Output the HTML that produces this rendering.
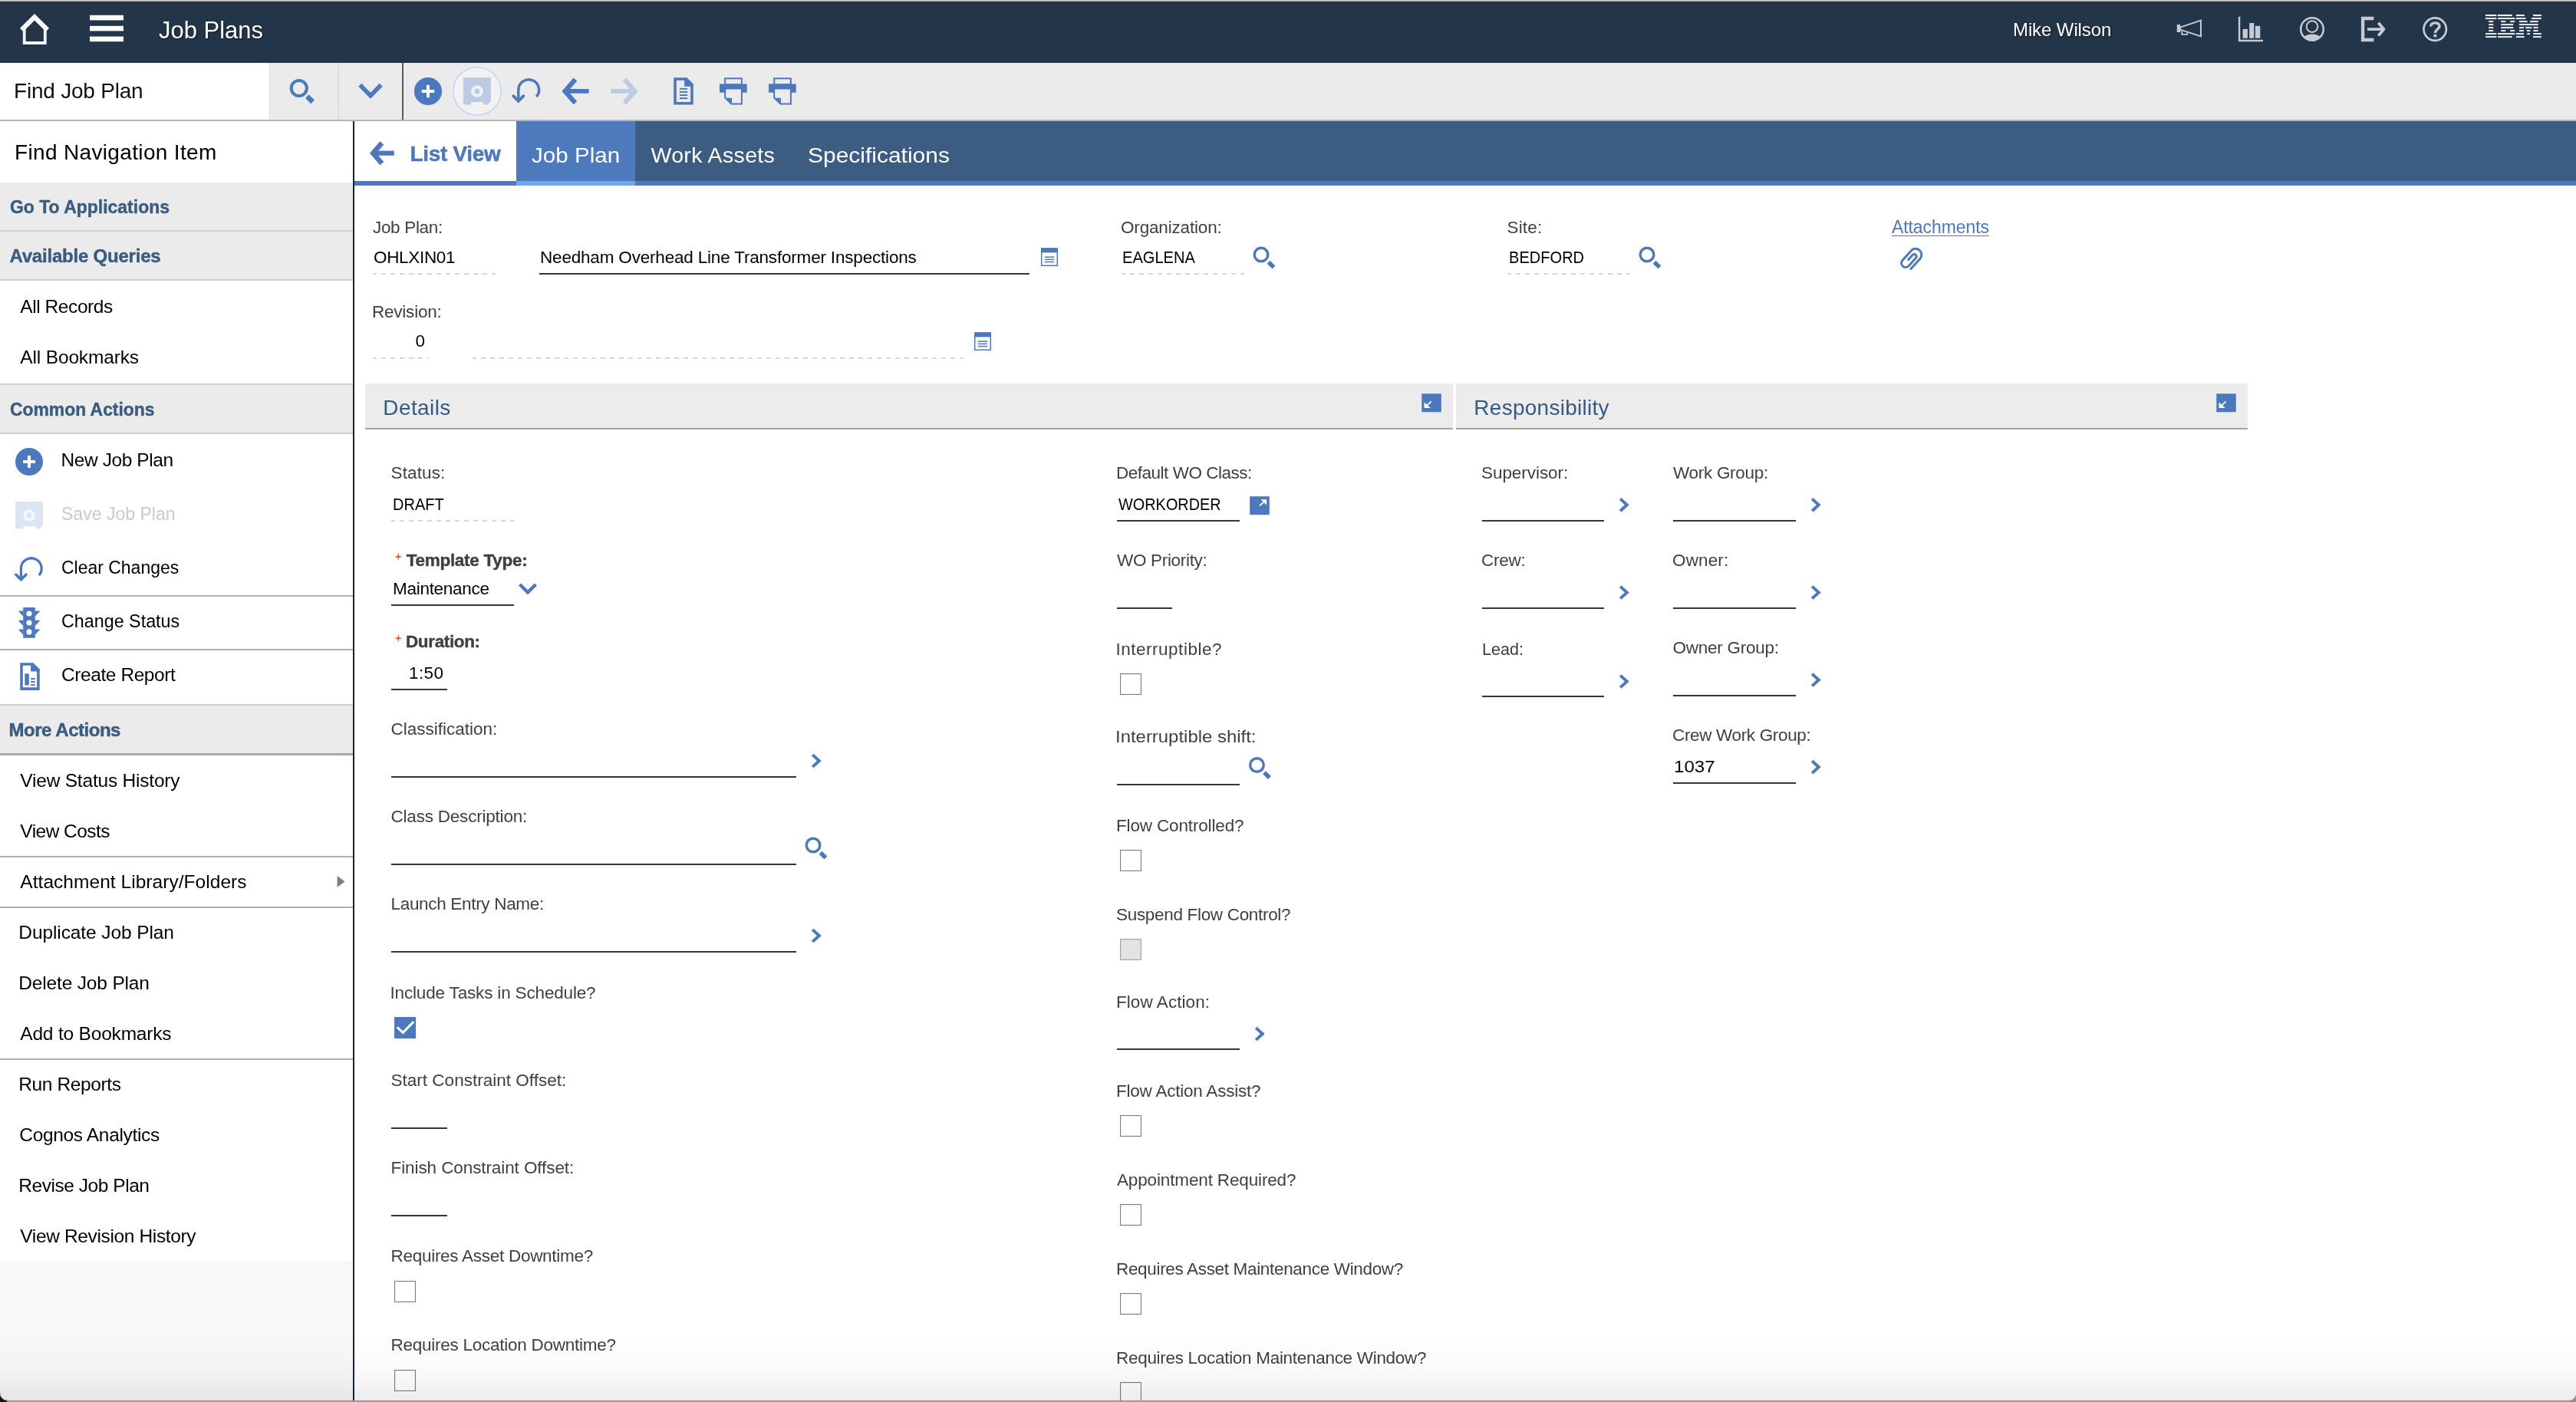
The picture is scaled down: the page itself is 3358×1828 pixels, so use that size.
<!DOCTYPE html>
<html><head><meta charset="utf-8"><title>Job Plans</title>
<style>
html,body{margin:0;padding:0;}
body{width:3358px;height:1828px;position:relative;overflow:hidden;background:#fff;font-family:"Liberation Sans", sans-serif;}
#root{position:absolute;left:0;top:0;width:3358px;height:1828px;overflow:hidden;will-change:transform;}
#root div,#root svg{position:absolute;}
.t{white-space:nowrap;}
</style></head><body><div id="root">
<div style="left:0px;top:0px;width:3358px;height:2px;background:#c0c0c0;"></div>
<div style="left:0px;top:2px;width:3358px;height:80px;background:#233548;"></div>
<div style="left:0px;top:2px;width:3358px;height:1px;background:#1c2e43;"></div>
<div style="left:0px;top:82px;width:3358px;height:74px;background:#ebebeb;"></div>
<div style="left:0px;top:82px;width:351px;height:74px;background:#fff;"></div>
<div style="left:351px;top:82px;width:1px;height:74px;background:#d9d9d9;"></div>
<div style="left:440px;top:82px;width:2px;height:74px;background:#dcdcdc;"></div>
<div style="left:524px;top:82px;width:2px;height:74px;background:#5a5a5a;"></div>
<div style="left:0px;top:156px;width:3358px;height:2px;background:#b5b5b5;"></div>
<div style="left:0px;top:158px;width:460px;height:80px;background:#fff;"></div>
<div style="left:0px;top:238px;width:460px;height:62px;background:#ebebeb;"></div>
<div style="left:0px;top:300px;width:460px;height:2px;background:#cfcfcf;"></div>
<div style="left:0px;top:302px;width:460px;height:62px;background:#ebebeb;"></div>
<div style="left:0px;top:364px;width:460px;height:2px;background:#cfcfcf;"></div>
<div style="left:0px;top:366px;width:460px;height:134px;background:#fff;"></div>
<div style="left:0px;top:500px;width:460px;height:2px;background:#cfcfcf;"></div>
<div style="left:0px;top:502px;width:460px;height:62px;background:#ebebeb;"></div>
<div style="left:0px;top:564px;width:460px;height:2px;background:#cfcfcf;"></div>
<div style="left:0px;top:566px;width:460px;height:352px;background:#fff;"></div>
<div style="left:0px;top:776px;width:460px;height:2px;background:#b0b0b0;"></div>
<div style="left:0px;top:846px;width:460px;height:2px;background:#b0b0b0;"></div>
<div style="left:0px;top:918px;width:460px;height:2px;background:#d2d2d2;"></div>
<div style="left:0px;top:920px;width:460px;height:62px;background:#ebebeb;"></div>
<div style="left:0px;top:982px;width:460px;height:3px;background:#a9a9a9;"></div>
<div style="left:0px;top:985px;width:460px;height:659px;background:#fff;"></div>
<div style="left:0px;top:1116px;width:460px;height:2px;background:#b0b0b0;"></div>
<div style="left:0px;top:1182px;width:460px;height:2px;background:#b0b0b0;"></div>
<div style="left:0px;top:1380px;width:460px;height:2px;background:#b0b0b0;"></div>
<div style="left:0px;top:1644px;width:460px;height:184px;background:#f8f8f8;"></div>
<div style="left:460px;top:158px;width:2px;height:1670px;background:#10263c;"></div>
<div style="left:462px;top:158px;width:2896px;height:78px;background:#3c5c82;"></div>
<div style="left:462px;top:158px;width:211px;height:78px;background:#fff;"></div>
<div style="left:673px;top:158px;width:155px;height:78px;background:#4d79bd;"></div>
<div style="left:462px;top:236px;width:2896px;height:6px;background:#4d79bd;"></div>
<div style="left:673px;top:236px;width:155px;height:6px;background:#6baaf0;"></div>
<div style="left:476px;top:500px;width:1418px;height:58px;background:#ececec;"></div>
<div style="left:476px;top:558px;width:1418px;height:2px;background:#a3a3a3;"></div>
<div style="left:1898px;top:500px;width:1032px;height:58px;background:#ececec;"></div>
<div style="left:1898px;top:558px;width:1032px;height:2px;background:#a3a3a3;"></div>
<div class="t" style="left:207.00px;top:23px;font-size:32px;line-height:32px;color:#fff;transform:scaleX(0.9675);transform-origin:0 0;text-shadow:1px 1px 2px rgba(0,0,0,.5);">Job Plans</div>
<div class="t" style="left:2624.00px;top:27px;font-size:24px;line-height:24px;color:#fff;letter-spacing:-0.100px;text-shadow:1px 1px 2px rgba(0,0,0,.5);">Mike Wilson</div>
<div class="t" style="left:18.00px;top:105px;font-size:28px;line-height:28px;color:#111;letter-spacing:-0.220px;">Find Job Plan</div>
<div class="t" style="left:534.40px;top:187px;font-size:28px;line-height:28px;color:#4c78bd;letter-spacing:-0.310px;font-weight:bold;-webkit-text-stroke:0.5px #4c78bd;">List View</div>
<div class="t" style="left:693.30px;top:188px;font-size:28.5px;line-height:28.5px;color:#fff;transform:scaleX(1.0380);transform-origin:0 0;">Job Plan</div>
<div class="t" style="left:848.40px;top:188px;font-size:28.5px;line-height:28.5px;color:#fff;letter-spacing:0.363px;">Work Assets</div>
<div class="t" style="left:1052.75px;top:188px;font-size:28.5px;line-height:28.5px;color:#fff;transform:scaleX(1.0516);transform-origin:0 0;">Specifications</div>
<div class="t" style="left:19.00px;top:185px;font-size:28px;line-height:28px;color:#000;letter-spacing:0.344px;">Find Navigation Item</div>
<div class="t" style="left:12.50px;top:258px;font-size:24px;line-height:24px;color:#3b5c82;transform:scaleX(0.9570);transform-origin:0 0;font-weight:bold;-webkit-text-stroke:0.45px #3b5c82;">Go To Applications</div>
<div class="t" style="left:12.50px;top:322px;font-size:24px;line-height:24px;color:#3b5c82;letter-spacing:-0.212px;font-weight:bold;-webkit-text-stroke:0.45px #3b5c82;">Available Queries</div>
<div class="t" style="left:12.50px;top:522px;font-size:24px;line-height:24px;color:#3b5c82;transform:scaleX(0.9530);transform-origin:0 0;font-weight:bold;-webkit-text-stroke:0.45px #3b5c82;">Common Actions</div>
<div class="t" style="left:11.50px;top:940px;font-size:24px;line-height:24px;color:#3b5c82;letter-spacing:-0.470px;font-weight:bold;-webkit-text-stroke:0.45px #3b5c82;">More Actions</div>
<div class="t" style="left:26.30px;top:388px;font-size:24.5px;line-height:24.5px;color:#000;letter-spacing:-0.431px;">All Records</div>
<div class="t" style="left:26.30px;top:454px;font-size:24.5px;line-height:24.5px;color:#000;letter-spacing:-0.152px;">All Bookmarks</div>
<div class="t" style="left:79.50px;top:588px;font-size:24.5px;line-height:24.5px;color:#000;letter-spacing:-0.412px;">New Job Plan</div>
<div class="t" style="left:80.06px;top:658px;font-size:24.5px;line-height:24.5px;color:#c9c9c9;transform:scaleX(0.9401);transform-origin:0 0;">Save Job Plan</div>
<div class="t" style="left:80.06px;top:728px;font-size:24.5px;line-height:24.5px;color:#000;transform:scaleX(0.9373);transform-origin:0 0;">Clear Changes</div>
<div class="t" style="left:80.05px;top:798px;font-size:24.5px;line-height:24.5px;color:#000;transform:scaleX(0.9513);transform-origin:0 0;">Change Status</div>
<div class="t" style="left:80.00px;top:868px;font-size:24.5px;line-height:24.5px;color:#000;letter-spacing:-0.423px;">Create Report</div>
<div class="t" style="left:26.30px;top:1006px;font-size:24.5px;line-height:24.5px;color:#000;letter-spacing:-0.206px;">View Status History</div>
<div class="t" style="left:26.30px;top:1072px;font-size:24.5px;line-height:24.5px;color:#000;letter-spacing:-0.538px;">View Costs</div>
<div class="t" style="left:26.30px;top:1138px;font-size:24.5px;line-height:24.5px;color:#000;letter-spacing:0.045px;">Attachment Library/Folders</div>
<div class="t" style="left:24.30px;top:1204px;font-size:24.5px;line-height:24.5px;color:#000;letter-spacing:-0.098px;">Duplicate Job Plan</div>
<div class="t" style="left:24.30px;top:1270px;font-size:24.5px;line-height:24.5px;color:#000;letter-spacing:-0.168px;">Delete Job Plan</div>
<div class="t" style="left:26.30px;top:1336px;font-size:24.5px;line-height:24.5px;color:#000;letter-spacing:-0.195px;">Add to Bookmarks</div>
<div class="t" style="left:24.30px;top:1402px;font-size:24.5px;line-height:24.5px;color:#000;letter-spacing:-0.379px;">Run Reports</div>
<div class="t" style="left:25.30px;top:1468px;font-size:24.5px;line-height:24.5px;color:#000;letter-spacing:-0.336px;">Cognos Analytics</div>
<div class="t" style="left:24.30px;top:1534px;font-size:24.5px;line-height:24.5px;color:#000;letter-spacing:-0.458px;">Revise Job Plan</div>
<div class="t" style="left:26.30px;top:1600px;font-size:24.5px;line-height:24.5px;color:#000;letter-spacing:-0.360px;">View Revision History</div>
<div class="t" style="left:486.00px;top:286px;font-size:22.5px;line-height:22.5px;color:#404040;letter-spacing:-0.320px;">Job Plan:</div>
<div class="t" style="left:487.00px;top:325px;font-size:22.5px;line-height:22.5px;color:#000;letter-spacing:-0.326px;">OHLXIN01</div>
<div class="t" style="left:704.00px;top:325px;font-size:22.5px;line-height:22.5px;color:#000;letter-spacing:-0.186px;">Needham Overhead Line Transformer Inspections</div>
<div class="t" style="left:485.00px;top:396px;font-size:22.5px;line-height:22.5px;color:#404040;letter-spacing:-0.223px;">Revision:</div>
<div class="t" style="left:541.50px;top:434px;font-size:22.5px;line-height:22.5px;color:#000;">0</div>
<div class="t" style="left:1461.00px;top:286px;font-size:22.5px;line-height:22.5px;color:#404040;letter-spacing:-0.173px;">Organization:</div>
<div class="t" style="left:1463.11px;top:325px;font-size:22.5px;line-height:22.5px;color:#000;transform:scaleX(0.8928);transform-origin:0 0;">EAGLENA</div>
<div class="t" style="left:1964.50px;top:286px;font-size:22.5px;line-height:22.5px;color:#404040;letter-spacing:0.182px;">Site:</div>
<div class="t" style="left:1967.11px;top:325px;font-size:22.5px;line-height:22.5px;color:#000;transform:scaleX(0.8919);transform-origin:0 0;">BEDFORD</div>
<div class="t" style="left:2466.00px;top:285px;font-size:23px;line-height:23px;color:#4c78bd;letter-spacing:-0.084px;">Attachments</div>
<div style="left:2466px;top:306.7px;width:127px;height:1.6px;background:#4c78bd;"></div>
<div class="t" style="left:499.30px;top:518px;font-size:28px;line-height:28px;color:#355a83;letter-spacing:0.402px;">Details</div>
<div class="t" style="left:1921.30px;top:518px;font-size:28px;line-height:28px;color:#355a83;letter-spacing:0.274px;">Responsibility</div>
<div class="t" style="left:509.50px;top:606px;font-size:22.5px;line-height:22.5px;color:#404040;letter-spacing:0.119px;">Status:</div>
<div class="t" style="left:512.11px;top:647px;font-size:22.5px;line-height:22.5px;color:#000;transform:scaleX(0.8889);transform-origin:0 0;">DRAFT</div>
<div class="t" style="left:529.70px;top:720px;font-size:22.5px;line-height:22.5px;color:#404040;letter-spacing:-0.285px;font-weight:bold;-webkit-text-stroke:0.4px #404040;">Template Type:</div>
<div class="t" style="left:512.00px;top:757px;font-size:22.5px;line-height:22.5px;color:#000;letter-spacing:-0.282px;">Maintenance</div>
<div class="t" style="left:529.00px;top:826px;font-size:22.5px;line-height:22.5px;color:#404040;letter-spacing:-0.374px;font-weight:bold;-webkit-text-stroke:0.4px #404040;">Duration:</div>
<div class="t" style="left:533.00px;top:867px;font-size:22.5px;line-height:22.5px;color:#000;letter-spacing:0.407px;">1:50</div>
<div class="t" style="left:509.50px;top:940px;font-size:22.5px;line-height:22.5px;color:#404040;">Classification:</div>
<div class="t" style="left:509.50px;top:1054px;font-size:22.5px;line-height:22.5px;color:#404040;letter-spacing:-0.209px;">Class Description:</div>
<div class="t" style="left:509.50px;top:1168px;font-size:22.5px;line-height:22.5px;color:#404040;letter-spacing:-0.315px;">Launch Entry Name:</div>
<div class="t" style="left:508.50px;top:1284px;font-size:22.5px;line-height:22.5px;color:#404040;letter-spacing:-0.166px;">Include Tasks in Schedule?</div>
<div class="t" style="left:509.50px;top:1398px;font-size:22.5px;line-height:22.5px;color:#404040;letter-spacing:0.014px;">Start Constraint Offset:</div>
<div class="t" style="left:509.50px;top:1512px;font-size:22.5px;line-height:22.5px;color:#404040;letter-spacing:-0.091px;">Finish Constraint Offset:</div>
<div class="t" style="left:509.50px;top:1627px;font-size:22.5px;line-height:22.5px;color:#404040;letter-spacing:-0.276px;">Requires Asset Downtime?</div>
<div class="t" style="left:509.50px;top:1743px;font-size:22.5px;line-height:22.5px;color:#404040;letter-spacing:-0.256px;">Requires Location Downtime?</div>
<div class="t" style="left:1455.00px;top:606px;font-size:22.5px;line-height:22.5px;color:#404040;letter-spacing:-0.487px;">Default WO Class:</div>
<div class="t" style="left:1457.50px;top:647px;font-size:22.5px;line-height:22.5px;color:#000;transform:scaleX(0.8841);transform-origin:0 0;">WORKORDER</div>
<div class="t" style="left:1456.00px;top:720px;font-size:22.5px;line-height:22.5px;color:#404040;letter-spacing:-0.318px;">WO Priority:</div>
<div class="t" style="left:1454.40px;top:836px;font-size:22.5px;line-height:22.5px;color:#404040;letter-spacing:0.522px;">Interruptible?</div>
<div class="t" style="left:1453.87px;top:950px;font-size:22.5px;line-height:22.5px;color:#404040;transform:scaleX(1.0630);transform-origin:0 0;">Interruptible shift:</div>
<div class="t" style="left:1455.00px;top:1066px;font-size:22.5px;line-height:22.5px;color:#404040;letter-spacing:-0.154px;">Flow Controlled?</div>
<div class="t" style="left:1455.00px;top:1182px;font-size:22.5px;line-height:22.5px;color:#404040;letter-spacing:-0.318px;">Suspend Flow Control?</div>
<div class="t" style="left:1455.00px;top:1296px;font-size:22.5px;line-height:22.5px;color:#404040;letter-spacing:0.065px;">Flow Action:</div>
<div class="t" style="left:1455.00px;top:1412px;font-size:22.5px;line-height:22.5px;color:#404040;letter-spacing:-0.225px;">Flow Action Assist?</div>
<div class="t" style="left:1456.00px;top:1528px;font-size:22.5px;line-height:22.5px;color:#404040;letter-spacing:-0.145px;">Appointment Required?</div>
<div class="t" style="left:1455.00px;top:1644px;font-size:22.5px;line-height:22.5px;color:#404040;letter-spacing:-0.331px;">Requires Asset Maintenance Window?</div>
<div class="t" style="left:1455.00px;top:1760px;font-size:22.5px;line-height:22.5px;color:#404040;letter-spacing:-0.298px;">Requires Location Maintenance Window?</div>
<div class="t" style="left:1931.00px;top:606px;font-size:22.5px;line-height:22.5px;color:#404040;letter-spacing:-0.055px;">Supervisor:</div>
<div class="t" style="left:1931.00px;top:720px;font-size:22.5px;line-height:22.5px;color:#404040;letter-spacing:-0.251px;">Crew:</div>
<div class="t" style="left:1931.54px;top:836px;font-size:22.5px;line-height:22.5px;color:#404040;transform:scaleX(0.9583);transform-origin:0 0;">Lead:</div>
<div class="t" style="left:2181.00px;top:606px;font-size:22.5px;line-height:22.5px;color:#404040;letter-spacing:-0.287px;">Work Group:</div>
<div class="t" style="left:2180.00px;top:720px;font-size:22.5px;line-height:22.5px;color:#404040;letter-spacing:0.146px;">Owner:</div>
<div class="t" style="left:2180.60px;top:834px;font-size:22.5px;line-height:22.5px;color:#404040;letter-spacing:-0.269px;">Owner Group:</div>
<div class="t" style="left:2180.00px;top:948px;font-size:22.5px;line-height:22.5px;color:#404040;letter-spacing:-0.342px;">Crew Work Group:</div>
<div class="t" style="left:2181.93px;top:989px;font-size:22.5px;line-height:22.5px;color:#000;transform:scaleX(1.0713);transform-origin:0 0;">1037</div>
<div style="left:486px;top:356px;width:160px;height:2px;background:repeating-linear-gradient(90deg,#d6d6d6 0 5px,transparent 5px 11px,#d6d6d6 11px 12px);"></div>
<div style="left:703px;top:356px;width:639px;height:2px;background:#353535;"></div>
<div style="left:486px;top:466px;width:73px;height:2px;background:repeating-linear-gradient(90deg,#d6d6d6 0 5px,transparent 5px 11px,#d6d6d6 11px 12px);"></div>
<div style="left:616px;top:466px;width:640px;height:2px;background:repeating-linear-gradient(90deg,#d6d6d6 0 5px,transparent 5px 11px,#d6d6d6 11px 12px);"></div>
<div style="left:1462px;top:356px;width:160px;height:2px;background:repeating-linear-gradient(90deg,#d6d6d6 0 5px,transparent 5px 11px,#d6d6d6 11px 12px);"></div>
<div style="left:1965px;top:356px;width:160px;height:2px;background:repeating-linear-gradient(90deg,#d6d6d6 0 5px,transparent 5px 11px,#d6d6d6 11px 12px);"></div>
<div style="left:510px;top:678px;width:160px;height:2px;background:repeating-linear-gradient(90deg,#d6d6d6 0 5px,transparent 5px 11px,#d6d6d6 11px 12px);"></div>
<div style="left:510px;top:788px;width:160px;height:2px;background:#353535;"></div>
<div style="left:510px;top:898px;width:73px;height:2px;background:#353535;"></div>
<div style="left:510px;top:1012px;width:528px;height:2px;background:#353535;"></div>
<div style="left:510px;top:1126px;width:528px;height:2px;background:#353535;"></div>
<div style="left:510px;top:1240px;width:528px;height:2px;background:#353535;"></div>
<div style="left:510px;top:1470px;width:73px;height:2px;background:#353535;"></div>
<div style="left:510px;top:1584px;width:73px;height:2px;background:#353535;"></div>
<div style="left:1456px;top:678px;width:160px;height:2px;background:#353535;"></div>
<div style="left:1456px;top:791.6px;width:72px;height:2px;background:#353535;"></div>
<div style="left:1456px;top:1022px;width:160px;height:2px;background:#353535;"></div>
<div style="left:1456px;top:1367px;width:160px;height:2px;background:#353535;"></div>
<div style="left:1932px;top:678px;width:159px;height:2px;background:#353535;"></div>
<div style="left:1932px;top:791.6px;width:159px;height:2px;background:#353535;"></div>
<div style="left:1932px;top:907.4px;width:159px;height:2px;background:#353535;"></div>
<div style="left:2181px;top:678px;width:160px;height:2px;background:#353535;"></div>
<div style="left:2181px;top:791.6px;width:160px;height:2px;background:#353535;"></div>
<div style="left:2181px;top:905.7px;width:160px;height:2px;background:#353535;"></div>
<div style="left:2181px;top:1020px;width:160px;height:2px;background:#353535;"></div>
<svg style="left:514px;top:1326px;" width="28" height="28" viewBox="0 0 28 28"><rect width="28" height="28" fill="#4c78bd"/><path d="M3.8 13.3 L11.3 20.4 L25.2 6.1" fill="none" stroke="#fff" stroke-width="3"/></svg>
<div style="left:514px;top:1670px;width:28px;height:28px;box-sizing:border-box;border:1.2px solid #7c7c7c;background:#fff;box-shadow:inset 0 0 0 1px rgba(0,0,0,0.06);"></div>
<div style="left:514px;top:1786px;width:28px;height:28px;box-sizing:border-box;border:1.2px solid #7c7c7c;background:#fff;box-shadow:inset 0 0 0 1px rgba(0,0,0,0.06);"></div>
<div style="left:1460px;top:878px;width:28px;height:28px;box-sizing:border-box;border:1.2px solid #7c7c7c;background:#fff;box-shadow:inset 0 0 0 1px rgba(0,0,0,0.06);"></div>
<div style="left:1460px;top:1108px;width:28px;height:28px;box-sizing:border-box;border:1.2px solid #7c7c7c;background:#fff;box-shadow:inset 0 0 0 1px rgba(0,0,0,0.06);"></div>
<div style="left:1460px;top:1224px;width:28px;height:28px;box-sizing:border-box;border:1.2px solid #a6a6a6;background:#e3e3e3;box-shadow:inset 0 0 0 1px rgba(0,0,0,0.06);"></div>
<div style="left:1460px;top:1454px;width:28px;height:28px;box-sizing:border-box;border:1.2px solid #7c7c7c;background:#fff;box-shadow:inset 0 0 0 1px rgba(0,0,0,0.06);"></div>
<div style="left:1460px;top:1570px;width:28px;height:28px;box-sizing:border-box;border:1.2px solid #7c7c7c;background:#fff;box-shadow:inset 0 0 0 1px rgba(0,0,0,0.06);"></div>
<div style="left:1460px;top:1686px;width:28px;height:28px;box-sizing:border-box;border:1.2px solid #7c7c7c;background:#fff;box-shadow:inset 0 0 0 1px rgba(0,0,0,0.06);"></div>
<div style="left:1460px;top:1802px;width:28px;height:28px;box-sizing:border-box;border:1.2px solid #7c7c7c;background:#fff;box-shadow:inset 0 0 0 1px rgba(0,0,0,0.06);"></div>
<svg style="left:0;top:0" width="3358" height="1828" viewBox="0 0 3358 1828"><path d="M28.1 39 L45 22.3 L61.9 39" fill="none" stroke="#fff" stroke-width="6" stroke-linejoin="miter"/><path d="M31.7 38 V56 H58.8 V38" fill="none" stroke="#f2f4f6" stroke-width="3.8"/><rect x="117" y="19.8" width="44" height="6.6" fill="#fff"/><rect x="117" y="33.8" width="44" height="6.6" fill="#fff"/><rect x="117" y="47.6" width="44" height="6.6" fill="#fff"/><path d="M2842 35.6 L2869 26.6 V47.4 L2842 38.6 Z" fill="none" stroke="#c5cbd3" stroke-width="2" stroke-linejoin="miter"/><rect x="2837.8" y="32" width="4.4" height="10" fill="#c5cbd3"/><path d="M2844.3 40.5 V44.8 H2851.2 V42.6" fill="none" stroke="#c5cbd3" stroke-width="1.8"/><path d="M2919.1 21.8 V53 H2950" fill="none" stroke="#c5cbd3" stroke-width="2.4"/><rect x="2923.6" y="37.9" width="6.3" height="11.9" fill="#c5cbd3"/><rect x="2932.2" y="30" width="6.1" height="19.8" fill="#c5cbd3"/><rect x="2939.9" y="33.8" width="6.4" height="16" fill="#c5cbd3"/><path d="M3002.78 48.26 A14 9.6 0 0 1 3025.22 48.26 A15.2 15.2 0 0 1 3002.78 48.26 Z" fill="#c5cbd3"/><circle cx="3014" cy="38" r="14.8" fill="none" stroke="#c5cbd3" stroke-width="2.5"/><circle cx="3014" cy="34.6" r="7.3" fill="none" stroke="#c5cbd3" stroke-width="2"/><path d="M3094.4 24 H3080.1 V52 H3094.4" fill="none" stroke="#c5cbd3" stroke-width="4.4"/><path d="M3086 38.1 H3106" fill="none" stroke="#c5cbd3" stroke-width="3.7"/><path d="M3100.4 29.7 L3107.4 38.1 L3100.4 46.5" fill="none" stroke="#c5cbd3" stroke-width="3.7" stroke-linejoin="miter"/><circle cx="3174.2" cy="38.1" r="14.7" fill="none" stroke="#c5cbd3" stroke-width="2.7"/><path d="M3168.8 34.4 C3168.8 30.6 3171.2 29.9 3174.3 29.9 C3177.6 29.9 3180 31.4 3180 34.2 C3180 37.6 3174.4 38.6 3174.4 43" fill="none" stroke="#c5cbd3" stroke-width="3.4"/><rect x="3172.4" y="44.8" width="4" height="3.6" fill="#c5cbd3"/><rect x="3240.0" y="19" width="14.4" height="2.1" fill="#fff"/><rect x="3256.0" y="19" width="18.7" height="2.1" fill="#fff"/><rect x="3279.8" y="19" width="10.9" height="2.1" fill="#fff"/><rect x="3302.0" y="19" width="10.9" height="2.1" fill="#fff"/><rect x="3240.0" y="23" width="14.4" height="2.1" fill="#dfe3e8"/><rect x="3256.0" y="23" width="22.4" height="2.1" fill="#dfe3e8"/><rect x="3279.8" y="23" width="12.8" height="2.1" fill="#dfe3e8"/><rect x="3300.0" y="23" width="12.9" height="2.1" fill="#dfe3e8"/><rect x="3244.2" y="27" width="6.1" height="2.1" fill="#dfe3e8"/><rect x="3260.2" y="27" width="6.1" height="2.1" fill="#dfe3e8"/><rect x="3272.1" y="27" width="6.1" height="2.1" fill="#dfe3e8"/><rect x="3284.0" y="27" width="10.6" height="2.1" fill="#dfe3e8"/><rect x="3298.1" y="27" width="10.6" height="2.1" fill="#dfe3e8"/><rect x="3244.2" y="31" width="6.1" height="2.1" fill="#dfe3e8"/><rect x="3260.2" y="31" width="16.1" height="2.1" fill="#dfe3e8"/><rect x="3284.0" y="31" width="24.7" height="2.1" fill="#dfe3e8"/><rect x="3244.2" y="35" width="6.1" height="2.1" fill="#dfe3e8"/><rect x="3260.2" y="35" width="16.1" height="2.1" fill="#dfe3e8"/><rect x="3284.0" y="35" width="6.0" height="2.1" fill="#dfe3e8"/><rect x="3292.0" y="35" width="8.4" height="2.1" fill="#dfe3e8"/><rect x="3302.3" y="35" width="6.4" height="2.1" fill="#dfe3e8"/><rect x="3244.2" y="39" width="6.1" height="2.1" fill="#dfe3e8"/><rect x="3260.2" y="39" width="6.1" height="2.1" fill="#dfe3e8"/><rect x="3272.1" y="39" width="6.1" height="2.1" fill="#dfe3e8"/><rect x="3284.0" y="39" width="6.0" height="2.1" fill="#dfe3e8"/><rect x="3293.9" y="39" width="4.5" height="2.1" fill="#dfe3e8"/><rect x="3302.3" y="39" width="6.4" height="2.1" fill="#dfe3e8"/><rect x="3240.0" y="43" width="14.4" height="2.1" fill="#dfe3e8"/><rect x="3256.0" y="43" width="22.4" height="2.1" fill="#dfe3e8"/><rect x="3279.8" y="43" width="10.2" height="2.1" fill="#dfe3e8"/><rect x="3294.3" y="43" width="3.7" height="2.1" fill="#dfe3e8"/><rect x="3302.3" y="43" width="10.6" height="2.1" fill="#dfe3e8"/><rect x="3240.0" y="47" width="14.4" height="2.1" fill="#dfe3e8"/><rect x="3256.0" y="47" width="18.7" height="2.1" fill="#dfe3e8"/><rect x="3279.8" y="47" width="10.9" height="2.1" fill="#dfe3e8"/><rect x="3302.0" y="47" width="10.9" height="2.1" fill="#dfe3e8"/><circle cx="389.8" cy="115" r="10.1" fill="none" stroke="#4c78bd" stroke-width="4"/><rect x="400.31" y="122.35" width="10.2" height="6.7" fill="#4c78bd" transform="rotate(44 400.31 125.70)"/><path d="M469.3 110.8 L483 124.8 L496.7 110.8" fill="none" stroke="#4c78bd" stroke-width="5.6" stroke-linejoin="miter"/><circle cx="558" cy="119" r="18.1" fill="#4c78bd"/><rect x="549.8" y="117.0" width="16.4" height="4" fill="#fff"/><rect x="556.0" y="110.8" width="4" height="16.4" fill="#fff"/><circle cx="622" cy="119" r="31.2" fill="#f2f2f2" stroke="#c3d9f3" stroke-width="1.6"/><path d="M604 101 H640 V132 L635.5 136.6 H630 V133 H614 V136.6 H604 Z" fill="#bccbe1"/><circle cx="622" cy="119" r="5.6" fill="none" stroke="#eef1f5" stroke-width="4.4"/><path d="M699.16 126.17 A13.4 13.4 0 1 0 675.80 117.20 V131" fill="none" stroke="#4c78bd" stroke-width="3.5"/><path d="M669.20 125.2 L675.80 131.8 L682.40 125.2" fill="none" stroke="#4c78bd" stroke-width="3.8" stroke-linecap="round" stroke-linejoin="miter"/><path d="M735.3 118.9 H767.5999999999999" stroke="#4c78bd" stroke-width="5.6" fill="none"/><path d="M749.9 103.5 L736.5 118.9 L749.9 134.3" stroke="#4c78bd" stroke-width="6.2" fill="none" stroke-linejoin="miter"/><path d="M828.7 118.9 H796.4000000000001" stroke="#bccbe1" stroke-width="5.6" fill="none"/><path d="M814.1 103.5 L827.5 118.9 L814.1 134.3" stroke="#bccbe1" stroke-width="6.2" fill="none" stroke-linejoin="miter"/><path d="M880 103 H894.6 L902 110.4 V134.8 H880 Z" fill="none" stroke="#4c78bd" stroke-width="3.6" stroke-linejoin="miter"/><path d="M892.2 101.4 H895.4 L903.8 109.8 V112.8 H892.2 Z" fill="#4c78bd"/><rect x="886" y="114.8" width="10.2" height="2" fill="#4c78bd"/><rect x="886" y="118.9" width="10.2" height="2" fill="#4c78bd"/><rect x="886" y="123" width="10.2" height="2" fill="#4c78bd"/><rect x="886" y="127.1" width="10.2" height="2" fill="#4c78bd"/><rect x="945.2" y="102.3" width="21.7" height="8" fill="none" stroke="#4c78bd" stroke-width="2"/><rect x="938" y="109.4" width="35.7" height="11.3" fill="#4c78bd"/><path d="M945.2 115.4 H966.9 V135.6 H953.4 L945.2 127.6 Z" fill="#ebebeb" stroke="#4c78bd" stroke-width="2" stroke-linejoin="miter"/><path d="M945.6 127.8 H954 V136 Z" fill="#4c78bd"/><rect x="1009.2" y="102.3" width="21.7" height="8" fill="none" stroke="#4c78bd" stroke-width="2"/><rect x="1002" y="109.4" width="35.7" height="11.3" fill="#4c78bd"/><path d="M1009.2 115.4 H1030.9 V135.6 H1017.4 L1009.2 127.6 Z" fill="#ebebeb" stroke="#4c78bd" stroke-width="2" stroke-linejoin="miter"/><path d="M1009.6 127.8 H1018 V136 Z" fill="#4c78bd"/><path d="M485.2 199.7 H513.8" stroke="#4c78bd" stroke-width="6.2" fill="none"/><path d="M497.79999999999995 186.29999999999998 L486.4 199.7 L497.79999999999995 213.1" stroke="#4c78bd" stroke-width="6.6" fill="none" stroke-linejoin="miter"/><circle cx="38" cy="602" r="18" fill="#4c78bd"/><rect x="30" y="600.0" width="16" height="4" fill="#fff"/><rect x="36.0" y="594" width="4" height="16" fill="#fff"/><path d="M20 654 H56 V685 L51.5 689.6 H46 V686 H30 V689.6 H20 Z" fill="#dbe5f3"/><circle cx="38" cy="672" r="5.6" fill="none" stroke="#f3f6fb" stroke-width="4.4"/><path d="M50.76 750.17 A13.4 13.4 0 1 0 27.40 741.20 V755" fill="none" stroke="#4c78bd" stroke-width="3.3"/><path d="M20.80 749.2 L27.40 755.8 L34.00 749.2" fill="none" stroke="#4c78bd" stroke-width="3.5999999999999996" stroke-linecap="round" stroke-linejoin="miter"/><rect x="30.2" y="792" width="15.6" height="39.8" fill="#4c78bd"/><path d="M23.6 796.4 H30.4 V803.8 Z" fill="#4c78bd"/><path d="M52.4 796.4 H45.6 V803.8 Z" fill="#4c78bd"/><path d="M23.6 808.8 H30.4 V816.1999999999999 Z" fill="#4c78bd"/><path d="M52.4 808.8 H45.6 V816.1999999999999 Z" fill="#4c78bd"/><path d="M23.6 820.4 H30.4 V827.8 Z" fill="#4c78bd"/><path d="M52.4 820.4 H45.6 V827.8 Z" fill="#4c78bd"/><circle cx="38" cy="800" r="3.6" fill="#fff"/><circle cx="38" cy="812" r="3.6" fill="#fff"/><circle cx="38" cy="823.9" r="3.6" fill="#fff"/><path d="M28 866 H42.2 L49.9 873.6 V898.1 H28 Z" fill="none" stroke="#4c78bd" stroke-width="3.6" stroke-linejoin="miter"/><path d="M40.1 864.2 H43 L51.7 872.8 V875.5 H40.1 Z" fill="#4c78bd"/><rect x="32.3" y="878.3" width="5.5" height="15.3" fill="#4c78bd"/><rect x="40.1" y="884" width="5.6" height="2" fill="#4c78bd"/><rect x="40.1" y="888.1" width="5.6" height="2" fill="#4c78bd"/><rect x="40.1" y="892.2" width="5.6" height="2" fill="#4c78bd"/><path d="M439.6 1142 L449.6 1149.4 L439.6 1156.8 Z" fill="#7d7d7d"/><rect x="1357.7" y="324.09999999999997" width="20.6" height="22.2" fill="#fff" stroke="#4c78bd" stroke-width="1.5"/><rect x="1357" y="323.4" width="22" height="6" fill="#4c78bd"/><rect x="1361.8" y="334.4" width="12.4" height="1.5" fill="#4c78bd"/><rect x="1361.8" y="337.6" width="12.4" height="1.5" fill="#4c78bd"/><rect x="1361.8" y="340.8" width="12.4" height="1.5" fill="#4c78bd"/><rect x="1270.7" y="434.09999999999997" width="20.6" height="22.2" fill="#fff" stroke="#4c78bd" stroke-width="1.5"/><rect x="1270" y="433.4" width="22" height="6" fill="#4c78bd"/><rect x="1274.8" y="444.4" width="12.4" height="1.5" fill="#4c78bd"/><rect x="1274.8" y="447.6" width="12.4" height="1.5" fill="#4c78bd"/><rect x="1274.8" y="450.8" width="12.4" height="1.5" fill="#4c78bd"/><circle cx="1644" cy="332" r="8.8" fill="none" stroke="#4c78bd" stroke-width="3.4"/><rect x="1653.53" y="338.95" width="9.7" height="5.5" fill="#4c78bd" transform="rotate(44 1653.53 341.70)"/><circle cx="2147" cy="332" r="8.8" fill="none" stroke="#4c78bd" stroke-width="3.4"/><rect x="2156.53" y="338.95" width="9.7" height="5.5" fill="#4c78bd" transform="rotate(44 2156.53 341.70)"/><circle cx="1060" cy="1102" r="8.8" fill="none" stroke="#4c78bd" stroke-width="3.4"/><rect x="1069.53" y="1108.95" width="9.7" height="5.5" fill="#4c78bd" transform="rotate(44 1069.53 1111.70)"/><circle cx="1638.5" cy="997.5" r="8.8" fill="none" stroke="#4c78bd" stroke-width="3.4"/><rect x="1648.03" y="1004.45" width="9.7" height="5.5" fill="#4c78bd" transform="rotate(44 1648.03 1007.20)"/><path d="M1059.2 984.1 L1067.8 992.0 L1059.2 999.9" fill="none" stroke="#4c78bd" stroke-width="4" stroke-linejoin="miter"/><path d="M1059.2 1212.1 L1067.8 1220.0 L1059.2 1227.9" fill="none" stroke="#4c78bd" stroke-width="4" stroke-linejoin="miter"/><path d="M1637.2 1340.1 L1645.8 1348.0 L1637.2 1355.9" fill="none" stroke="#4c78bd" stroke-width="4" stroke-linejoin="miter"/><path d="M2112.2 650.4 L2120.8 658.3 L2112.2 666.1999999999999" fill="none" stroke="#4c78bd" stroke-width="4" stroke-linejoin="miter"/><path d="M2362.2 650.4 L2370.8 658.3 L2362.2 666.1999999999999" fill="none" stroke="#4c78bd" stroke-width="4" stroke-linejoin="miter"/><path d="M2112.2 764.6 L2120.8 772.5 L2112.2 780.4" fill="none" stroke="#4c78bd" stroke-width="4" stroke-linejoin="miter"/><path d="M2362.2 764.6 L2370.8 772.5 L2362.2 780.4" fill="none" stroke="#4c78bd" stroke-width="4" stroke-linejoin="miter"/><path d="M2112.2 880.6 L2120.8 888.5 L2112.2 896.4" fill="none" stroke="#4c78bd" stroke-width="4" stroke-linejoin="miter"/><path d="M2362.2 878.6 L2370.8 886.5 L2362.2 894.4" fill="none" stroke="#4c78bd" stroke-width="4" stroke-linejoin="miter"/><path d="M2362.2 992.2 L2370.8 1000.1 L2362.2 1008.0" fill="none" stroke="#4c78bd" stroke-width="4" stroke-linejoin="miter"/><path d="M677.6 762 L688 772.4 L698.4 762" fill="none" stroke="#4c78bd" stroke-width="4.4" stroke-linejoin="miter"/><path d="M519.2 720.5999999999999 L520.3000000000001 724.6999999999999 L524.4000000000001 725.8 L520.3000000000001 726.9 L519.2 731.0 L518.1 726.9 L514.0 725.8 L518.1 724.6999999999999 Z" fill="#e2622a"/><path d="M519.2 827.0 L520.3000000000001 831.1 L524.4000000000001 832.2 L520.3000000000001 833.3000000000001 L519.2 837.4000000000001 L518.1 833.3000000000001 L514.0 832.2 L518.1 831.1 Z" fill="#e2622a"/><path d="M2490.16 351.59 L2502.90 337.44 A7.84 7.84 0 0 0 2491.25 326.94 L2480.00 339.43 A5.49 5.49 0 0 0 2488.16 346.77 L2497.53 336.37 A2.91 2.91 0 0 0 2493.20 332.47 L2486.83 339.55" fill="none" stroke="#4c78bd" stroke-width="3.0"/><rect x="1853.3" y="513.3" width="25.5" height="24" fill="#4c78bd"/><path d="M1856.5 524.5 V532.0999999999999 H1864.8999999999999 Z" fill="#fff"/><path d="M1858.3 530.3 L1865.7 523.3" stroke="#fff" stroke-width="1.8" fill="none"/><rect x="2889.3" y="513.3" width="25.5" height="24" fill="#4c78bd"/><path d="M2892.5 524.5 V532.0999999999999 H2900.9 Z" fill="#fff"/><path d="M2894.3 530.3 L2901.7000000000003 523.3" stroke="#fff" stroke-width="1.8" fill="none"/><rect x="1629.2" y="647.2" width="25.6" height="24" fill="#4c78bd"/><path d="M1642 659.6 L1649.4 652.4" stroke="#fff" stroke-width="1.8" fill="none"/><path d="M1643.6 651.2 H1651.2 V658.8 Z" fill="#fff"/></svg>
<div style="left:0;top:1735px;width:3358px;height:91px;background:linear-gradient(to bottom,rgba(0,0,0,0),rgba(0,0,0,0.015) 50%,rgba(0,0,0,0.038) 73%,rgba(0,0,0,0.075));"></div>
<div style="left:0px;top:1825.5px;width:3358px;height:1.5px;background:#8c8c8c;"></div>
<div style="left:0px;top:1827px;width:3358px;height:1px;background:#a4a4a4;"></div>
<svg style="left:0;top:0" width="3358" height="1828" viewBox="0 0 3358 1828"><path d="M0 1817 A9 9 0 0 0 9 1826 L9 1828 L0 1828 Z" fill="#10151d"/><path d="M0 1816 A10 10 0 0 0 10 1826" fill="none" stroke="#9a9a9a" stroke-width="1"/><path d="M3358 1817 A9 9 0 0 1 3349 1826 L3349 1828 L3358 1828 Z" fill="#8d9094"/></svg>
</div></body></html>
